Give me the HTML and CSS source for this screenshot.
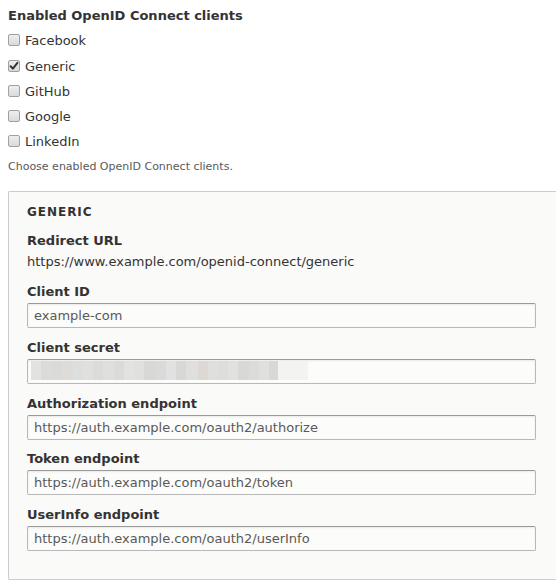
FILE: index.html
```html
<!DOCTYPE html>
<html lang="en">
<head>
<meta charset="utf-8">
<title>OpenID Connect clients</title>
<link rel="stylesheet" href="styles.css">
</head>
<body>
<div class="page">
  <div class="field-title">Enabled OpenID Connect clients</div>
  <div class="checkboxes">
    <label class="check-row"><span class="checkbox"></span><span>Facebook</span></label>
    <label class="check-row"><span class="checkbox checked"><svg viewBox="0 0 12 12" width="12" height="12"><path d="M2.6 6.2 L4.9 8.6 L9.4 2.9" fill="none" stroke="#333" stroke-width="2" stroke-linecap="round" stroke-linejoin="round"/></svg></span><span>Generic</span></label>
    <label class="check-row"><span class="checkbox"></span><span>GitHub</span></label>
    <label class="check-row"><span class="checkbox"></span><span>Google</span></label>
    <label class="check-row"><span class="checkbox"></span><span>LinkedIn</span></label>
  </div>
  <div class="description">Choose enabled OpenID Connect clients.</div>

  <div class="fieldset">
    <div class="legend">Generic</div>
    <div class="form-item">
      <div class="label">Redirect URL</div>
      <div class="plain">https://www.example.com/openid-connect/generic</div>
    </div>
    <div class="form-item">
      <div class="label">Client ID</div>
      <input class="text-input" type="text" value="example-com">
    </div>
    <div class="form-item">
      <div class="label">Client secret</div>
      <div class="text-input secret"><span class="blur"></span></div>
    </div>
    <div class="form-item">
      <div class="label">Authorization endpoint</div>
      <input class="text-input" type="text" value="https://auth.example.com/oauth2/authorize">
    </div>
    <div class="form-item">
      <div class="label">Token endpoint</div>
      <input class="text-input" type="text" value="https://auth.example.com/oauth2/token">
    </div>
    <div class="form-item">
      <div class="label">UserInfo endpoint</div>
      <input class="text-input" type="text" value="https://auth.example.com/oauth2/userInfo">
    </div>
  </div>
</div>
</body>
</html>
```
FILE: styles.css
```css
html, body {
  margin: 0;
  padding: 0;
  background: #ffffff;
  overflow: hidden;
}
body {
  font-family: "DejaVu Sans", "Noto Sans", sans-serif;
  font-size: 13px;
  color: #333333;
}
.page {
  padding: 7px 0 0 8px;
}
.field-title {
  font-weight: bold;
  line-height: 18px;
}
.checkboxes {
  display: flex;
  flex-direction: column;
}
.check-row {
  display: flex;
  align-items: flex-start;
  line-height: 18px;
  margin-top: 7.25px;
}
.checkbox {
  box-sizing: border-box;
  width: 12px;
  height: 12px;
  margin: 2px 5px 0 0;
  border: 1px solid #a0a0a0;
  border-radius: 2px;
  background: linear-gradient(#eeeeee, #dadada);
  position: relative;
  flex: none;
}
.checkbox svg {
  position: absolute;
  left: -1px;
  top: -1px;
}
.description {
  font-size: 11px;
  line-height: 16px;
  color: #595959;
  margin-top: 8px;
}
.fieldset {
  box-sizing: border-box;
  margin-top: 16px;
  border: 1px solid #cccccc;
  border-right-width: 0;
  border-radius: 2px 0 0 2px;
  background: #fafaf8;
  padding: 11px 18px 28px;
}
.legend {
  font-size: 12px;
  font-weight: bold;
  line-height: 18px;
  text-transform: uppercase;
  letter-spacing: 0.08em;
  margin-bottom: 11px;
}
.form-item {
  margin-bottom: 10.75px;
}
.form-item:last-child {
  margin-bottom: 0;
}
.label {
  font-weight: bold;
  line-height: 18px;
  margin-bottom: 2px;
}
.plain {
  line-height: 20px;
  margin-top: 0;
}
.text-input {
  display: block;
  box-sizing: border-box;
  width: 509px;
  height: 25px;
  margin: 0;
  padding: 0 6px;
  font-family: "DejaVu Sans", "Noto Sans", sans-serif;
  font-size: 13px;
  color: #595959;
  background: #fcfcfa;
  border: 1px solid #b8b8b8;
  border-top-color: #999999;
  border-radius: 2px;
  box-shadow: inset 0 1px 2px rgba(0, 0, 0, 0.08);
  outline: none;
}
.secret {
  padding: 1px 0 0 3px;
}
.blur {
  display: block;
  width: 277px;
  height: 19px;
  background: linear-gradient(to right,
    #e2e2e0 0, #e2e2e0 10px,
    #dbdbd9 10px, #dbdbd9 21px,
    #d9dbda 21px, #d9dbda 31px,
    #dedcd8 31px, #dedcd8 42px,
    #dddfdf 42px, #dddfdf 52px,
    #e0e0de 52px, #e0e0de 62px,
    #dbdbd9 62px, #dbdbd9 72px,
    #dfdfdb 72px, #dfdfdb 83px,
    #dbdbd9 83px, #dbdbd9 93px,
    #e2e2e1 93px, #e2e2e1 103px,
    #e0e0de 103px, #e0e0de 113px,
    #d8d8d6 113px, #d8d8d6 125px,
    #dadada 125px, #dadada 135px,
    #e1e1e1 135px, #e1e1e1 145px,
    #dad8d4 145px, #dad8d4 155px,
    #dfdfdd 155px, #dfdfdd 167px,
    #ddd8d3 167px, #ddd8d3 177px,
    #dfdfdd 177px, #dfdfdd 187px,
    #dcdede 187px, #dcdede 197px,
    #e1e1df 197px, #e1e1df 207px,
    #d8d8d6 207px, #d8d8d6 218px,
    #dbdbd9 218px, #dbdbd9 228px,
    #e0e0dc 228px, #e0e0dc 238px,
    #d8d8d6 238px, #d8d8d6 247px,
    #f3f3f1 247px, #f3f3f1 277px);
}
```
